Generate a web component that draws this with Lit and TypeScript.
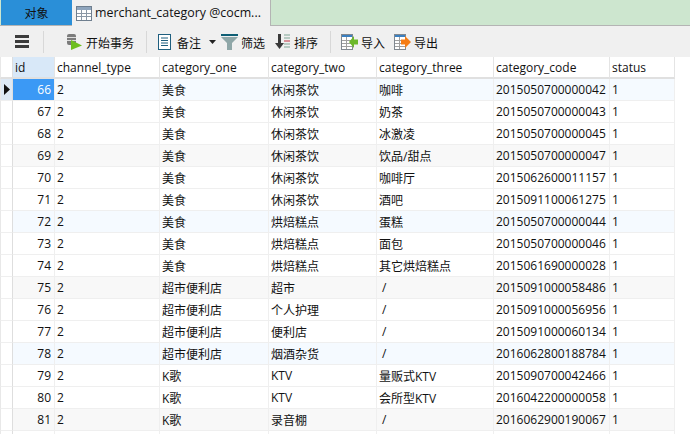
import { LitElement, html, css } from "lit";
import { customElement } from "lit/decorators.js";

const R: [string, string, string, string, string][] = [
  ["66","美食","休闲茶饮","咖啡","2015050700000042"],
  ["67","美食","休闲茶饮","奶茶","2015050700000043"],
  ["68","美食","休闲茶饮","冰激凌","2015050700000045"],
  ["69","美食","休闲茶饮","饮品/甜点","2015050700000047"],
  ["70","美食","休闲茶饮","咖啡厅","2015062600011157"],
  ["71","美食","休闲茶饮","酒吧","2015091100061275"],
  ["72","美食","烘焙糕点","蛋糕","2015050700000044"],
  ["73","美食","烘焙糕点","面包","2015050700000046"],
  ["74","美食","烘焙糕点","其它烘焙糕点","2015061690000028"],
  ["75","超市便利店","超市"," /","2015091000058486"],
  ["76","超市便利店","个人护理"," /","2015091000056956"],
  ["77","超市便利店","便利店"," /","2015091000060134"],
  ["78","超市便利店","烟酒杂货"," /","2016062800188784"],
  ["79","K歌","KTV","量贩式KTV","2015090700042466"],
  ["80","K歌","KTV","会所型KTV","2016042200000058"],
  ["81","K歌","录音棚"," /","2016062900190067"],
];
const HEAD = ["id","channel_type","category_one","category_two","category_three","category_code","status"];

@customElement("app-root")
export class AppRoot extends LitElement {
  static styles = css`
    :host { display: block; width: 690px; height: 434px; overflow: hidden; background: #fff;
      font-family: "Open Sans", "Noto Sans CJK SC", sans-serif; font-size: 12px; color: #111; }
    .tabs { display: flex; height: 26px; background: #cde6cf; border-bottom: 1px solid #b4b4b4; box-sizing: border-box; }
    .t1 { width: 71px; margin-left: 1px; background: #2a8fd8; color: #111; display: flex; align-items: center; justify-content: center; font-size: 12px; }
    .t2 { width: 199px; height: 26px; background: #f0f0f0; display: flex; align-items: center; gap: 3px; padding-left: 4px; box-sizing: border-box; border-right: 1px solid #b4b4b4; font-size: 12.4px; white-space: nowrap; }
    .t2 span { margin-bottom: 1px; }
    .bar { display: flex; align-items: center; height: 31px; background: #f0f0f0; color: #111; }
    .sep { width: 1px; height: 22px; background: #d8d8d8; }
    .ham { margin-left: 15px; }
    .s1 { margin-left: 14px; }
    .b { display: flex; align-items: center; white-space: nowrap; }
    .b span { margin-top: 2px; }
    .g3 { gap: 3px; }
    .g4 { gap: 4px; }
    .g5 { gap: 5px; }
    .m5 { margin-left: 5px; }
    .m8 { margin-left: 8px; }
    .m9 { margin-left: 9px; }
    .m10 { margin-left: 10px; }
    .m11 { margin-left: 11px; }
    .m12 { margin-left: 12px; }
    .m22 { margin-left: 22px; }
    .grid { display: grid; grid-template-columns: 13px 42px 105px 109px 108px 117px 116px 65px; grid-auto-rows: 22px; width: 675px; background: #fff; }
    .c { border-right: 1px solid #efefef; border-bottom: 1px solid #efefef; padding: 0 1px 0 2px; display: flex; align-items: center; white-space: pre; overflow: hidden; box-sizing: border-box; }
    .h { border-bottom: 2px solid #e0e0e0; border-right-color: #e4e4e4; }
    .h.sel { background: #d8e8f8; }
    .rh { padding: 0; border-right: 1px solid #dedede; border-left: 1px solid #e8e8e8; }
    .rh.cursel { background: #dde9f5; }
    .arrow { margin-left: 3px; }
    .num { justify-content: flex-end; padding-right: 3px; }
    .a { background: #f5faff; }
    .g { background: #f8f8f8; }
    .cur { background: #3b99f5; color: #fff; }
    .last { border-bottom: none; }
  `;

  render() {
    return html`
      <div class="tabs">
        <div class="t1">对象</div>
        <div class="t2">
          <svg width="16" height="15" viewBox="0 0 16 15"><rect x=".5" y=".5" width="15" height="14" fill="#fff" stroke="#6f7f8f"/><rect x="1" y="1" width="14" height="3" fill="#8fa5bd"/><path d="M1 7.500h14M1 10.500h14M5.500 4v10M10.500 4v10" stroke="#8b98a5"/></svg>
          <span>merchant_category @cocm...</span>
        </div>
      </div>
      <div class="bar">
        <svg class="ham" width="14" height="13" viewBox="0 0 14 13"><path d="M0 1.500h14M0 6.500h14M0 11.500h14" stroke="#3c3c3c" stroke-width="3"/></svg>
        <div class="sep s1"></div>
        <div class="b g4 m22">
          <svg width="16" height="18" viewBox="0 0 16 18"><rect x="1" y="1" width="9" height="11" rx="2" fill="#7b7b7b"/><path d="M1 4.500h9M1 7.500h9" stroke="#ddd"/><path d="M5 7l11 5.500L5 17z" fill="#6ebf1f"/></svg>
          <span>开始事务</span>
        </div>
        <div class="sep m12"></div>
        <div class="b g5 m11">
          <svg width="14" height="16" viewBox="0 0 14 16"><rect x=".5" y=".5" width="12" height="15" fill="#fff" stroke="#1f5f7f"/><path d="M3 4h7M3 6.500h7M3 9h7M3 11.500h7" stroke="#1f5f7f"/></svg>
          <span>备注</span>
        </div>
        <svg class="m8" width="7" height="4" viewBox="0 0 7 4"><path d="M0 0h7L3.500 4z" fill="#222"/></svg>
        <div class="b g3 m5">
          <svg width="17" height="16" viewBox="0 0 17 16"><rect width="17" height="2" fill="#0f5f75"/><path d="M0 3h17l-6 6v7H6V9z" fill="#8fa7a8"/></svg>
          <span>筛选</span>
        </div>
        <div class="b g4 m10">
          <svg width="15" height="16" viewBox="0 0 15 16"><path d="M4.500 0v10" stroke="#3a3a3a" stroke-width="3"/><path d="M0 9h9l-4.500 6z" fill="#3a3a3a"/><path d="M9 1h6M9 4h6M9 10h6M9 13h6" stroke="#7fa595"/><path d="M9 7h6" stroke="#c03040"/></svg>
          <span>排序</span>
        </div>
        <div class="sep m12"></div>
        <div class="b g3 m10">
          <svg width="17" height="16" viewBox="0 0 17 16"><rect x=".5" y=".5" width="11" height="15" fill="#fff" stroke="#808890"/><rect x="1" y="1" width="10" height="2" fill="#3b7fc0"/><path d="M1 6.500h10M1 9.500h10M1 12.500h10M5.500 3v12" stroke="#a0a0a0"/><path d="M17 5.500h-4V2L8 8l5 6v-3.500h4z" fill="#6cb82a"/></svg>
          <span>导入</span>
        </div>
        <div class="b g3 m9">
          <svg width="17" height="16" viewBox="0 0 17 16"><rect x=".5" y=".5" width="11" height="15" fill="#fff" stroke="#808890"/><rect x="1" y="1" width="10" height="2" fill="#3b7fc0"/><path d="M1 6.500h10M1 9.500h10M1 12.500h10M5.500 3v12" stroke="#a0a0a0"/><path d="M7 5.500h4V2l6 6-6 6v-3.500H7z" fill="#f57c14"/></svg>
          <span>导出</span>
        </div>
      </div>
      <div class="grid">
        <div class="c h rh"></div>
        ${HEAD.map((h, i) => html`<div class="c h ${i === 0 ? "sel" : ""}">${h}</div>`)}
        ${R.map((r, i) => {
          const tint = i % 6 === 0 ? "a" : i % 6 === 3 ? "g" : "";
          return html`
            <div class="c rh ${i === 0 ? "cursel" : ""}">${i === 0 ? html`<svg class="arrow" width="6" height="11" viewBox="0 0 6 11"><path d="M0 0l6 5.500L0 11z" fill="#111"/></svg>` : ""}</div>
            <div class="c num ${i === 0 ? "cur" : tint}">${r[0]}</div>
            <div class="c ${tint}">2</div>
            <div class="c ${tint}">${r[1]}</div>
            <div class="c ${tint}">${r[2]}</div>
            <div class="c ${tint}">${r[3]}</div>
            <div class="c ${tint}">${r[4]}</div>
            <div class="c ${tint}">1</div>
          `;
        })}
        <div class="c rh last"></div>
        ${HEAD.map(() => html`<div class="c last"></div>`)}
      </div>
    `;
  }
}
